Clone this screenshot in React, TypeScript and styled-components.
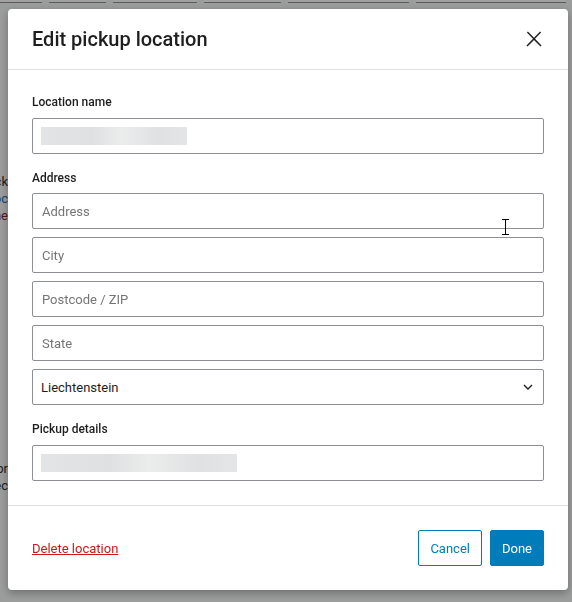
import React from 'react'
import styled, { createGlobalStyle } from 'styled-components'

const FONT = `Roboto, "Noto Sans", "Liberation Sans", sans-serif`

const GlobalStyle = createGlobalStyle`
  html, body {
    margin: 0;
    padding: 0;
    height: 100%;
    background: #fff;
  }
  body {
    font-family: ${FONT};
    color: #1e1e1e;
    overflow: hidden;
  }
`

const CloseIcon = () => (
  <svg width="24" height="24" viewBox="0 0 24 24" aria-hidden="true">
    <path
      fill="currentColor"
      d="M13 11.8l6.1-6.3-1-1-6.1 6.2-6.1-6.2-1 1 6.1 6.3-6.5 6.7 1 1 6.5-6.6 6.5 6.6 1-1z"
    />
  </svg>
)

const ChevronIcon = () => (
  <svg width="10" height="6" viewBox="0 0 10 6" aria-hidden="true">
    <path d="M1 1l4 4 4-4" fill="none" stroke="#1e1e1e" strokeWidth="1.4" />
  </svg>
)

const TextCursor = () => (
  <svg width="9" height="16" viewBox="0 0 9 16" aria-hidden="true">
    <path d="M1 .5h7M4.5.5v15M1 15.5h7" fill="none" stroke="#000" strokeWidth="1" />
  </svg>
)

const App: React.FC = () => {
  return (
    <>
      <GlobalStyle />
      <Page>
        <TopTabs>
          {[42, 57, 84, 77, 121, 150].map((w, i) => (
            <Tab key={i} style={{ width: w }} />
          ))}
        </TopTabs>
        <Backdrop>
          <Clip>
            <Line color="#2c3338">pick</Line>
            <Line color="#2271b1">loc</Line>
            <Line color="#8a2424">the</Line>
          </Clip>
          <Clip $top={236}>
            <Line color="#2c3338">for</Line>
            <Line color="#2c3338">selec</Line>
          </Clip>
        </Backdrop>
      </Page>

      <Overlay>
        <Modal>
          <Header>
            <Title>Edit pickup location</Title>
            <CloseButton aria-label="Close">
              <CloseIcon />
            </CloseButton>
          </Header>

          <Body>
            <Field>
              <Label>Location name</Label>
              <InputBox>
                <Redacted $width={146} />
              </InputBox>
            </Field>

            <Field $tight>
              <Label>Address</Label>
              <Stack>
                <Input placeholder="Address" />
                <Input placeholder="City" />
                <Input placeholder="Postcode / ZIP" />
                <Input placeholder="State" />
                <Select>
                  <span>Liechtenstein</span>
                  <ChevronIcon />
                </Select>
              </Stack>
            </Field>

            <Field>
              <Label>Pickup details</Label>
              <InputBox>
                <Redacted $width={196} />
              </InputBox>
            </Field>

            <Cursor>
              <TextCursor />
            </Cursor>
          </Body>

          <Footer>
            <DeleteLink href="#">Delete location</DeleteLink>
            <Actions>
              <Button $variant="secondary">Cancel</Button>
              <Button $variant="primary">Done</Button>
            </Actions>
          </Footer>
        </Modal>
      </Overlay>
    </>
  )
}

export default App

const Page = styled.div`
  height: 100vh;
  background: #f6f7f7;
`

const TopTabs = styled.div`
  display: flex;
  gap: 7px;
  height: 3px;
`

const Tab = styled.div`
  border-bottom: 1px solid #8f8f8f;
  background: #fff;
`

const Backdrop = styled.div`
  display: flex;
  flex-direction: column;
`

const Clip = styled.div<{ $top?: number }>`
  width: 8px;
  overflow: hidden;
  margin-top: ${(p) => p.$top ?? 170}px;
  direction: rtl;
  font-size: 13px;
  line-height: 17px;
`

const Line = styled.div<{ color: string }>`
  color: ${(p) => p.color};
  white-space: nowrap;
`

const Overlay = styled.div`
  position: fixed;
  inset: 0;
  background: rgba(0, 0, 0, 0.37);
  display: flex;
  align-items: flex-start;
  padding: 9px 0 0 8px;
`

const Modal = styled.div`
  position: relative;
  width: 560px;
  background: #fff;
  border-radius: 4px;
  box-shadow: 0 3px 8px rgba(0, 0, 0, 0.3);
  display: flex;
  flex-direction: column;
`

const Header = styled.div`
  display: flex;
  align-items: center;
  justify-content: space-between;
  height: 60px;
  padding: 0 22px 0 24px;
  border-bottom: 1px solid #e0e0e0;
`

const Title = styled.h1`
  margin: 0;
  font-size: 20px;
  font-weight: 500;
  line-height: 28px;
  color: #1e1e1e;
`

const CloseButton = styled.button`
  display: flex;
  align-items: center;
  justify-content: center;
  width: 24px;
  height: 24px;
  padding: 0;
  border: 0;
  background: none;
  color: #1e1e1e;
  cursor: pointer;
`

const Body = styled.div`
  padding: 24px 24px 24px;
  display: flex;
  flex-direction: column;
  gap: 16px;
`

const Field = styled.div<{ $tight?: boolean }>`
  display: flex;
  flex-direction: column;
  gap: ${(p) => (p.$tight ? 7 : 8)}px;
`

const Label = styled.label`
  font-size: 12px;
  font-weight: 500;
  line-height: 16px;
  color: #1e1e1e;
`

const Stack = styled.div`
  display: flex;
  flex-direction: column;
  gap: 8px;
`

const fieldBase = `
  box-sizing: border-box;
  height: 36px;
  width: 100%;
  border: 1px solid #8c8f94;
  border-radius: 2px;
  background: #fff;
  font-family: ${FONT};
  font-size: 13px;
  color: #1e1e1e;
`

const Input = styled.input`
  ${fieldBase}
  padding: 0 9px;
  outline: none;

  &::placeholder {
    color: #757575;
  }
`

const InputBox = styled.div`
  ${fieldBase}
  display: flex;
  align-items: center;
  padding: 0 8px;
`

const Redacted = styled.div<{ $width: number }>`
  width: ${(p) => p.$width}px;
  height: 18px;
  background: linear-gradient(
    90deg,
    #e3e4e5 0%,
    #dfe0e1 35%,
    #ebecec 55%,
    #e0e1e2 80%,
    #e4e5e6 100%
  );
`

const Select = styled.div`
  ${fieldBase}
  display: flex;
  align-items: center;
  justify-content: space-between;
  padding: 0 8px;

  svg {
    margin-right: 2px;
  }
`

const Cursor = styled.div`
  position: absolute;
  left: 493px;
  top: 210px;
  line-height: 0;
`

const Footer = styled.div`
  display: flex;
  align-items: center;
  justify-content: space-between;
  padding: 24px;
  border-top: 1px solid #e0e0e0;
`

const DeleteLink = styled.a`
  font-size: 13px;
  color: #cc1818;
  text-decoration: underline;
`

const Actions = styled.div`
  display: flex;
  gap: 8px;
`

const Button = styled.button<{ $variant: 'primary' | 'secondary' }>`
  height: 36px;
  padding: 0 11px;
  border-radius: 2px;
  font-family: ${FONT};
  font-size: 13px;
  cursor: pointer;
  border: 1px solid #007cba;
  background: ${(p) => (p.$variant === 'primary' ? '#007cba' : '#fff')};
  color: ${(p) => (p.$variant === 'primary' ? '#fff' : '#007cba')};
`
